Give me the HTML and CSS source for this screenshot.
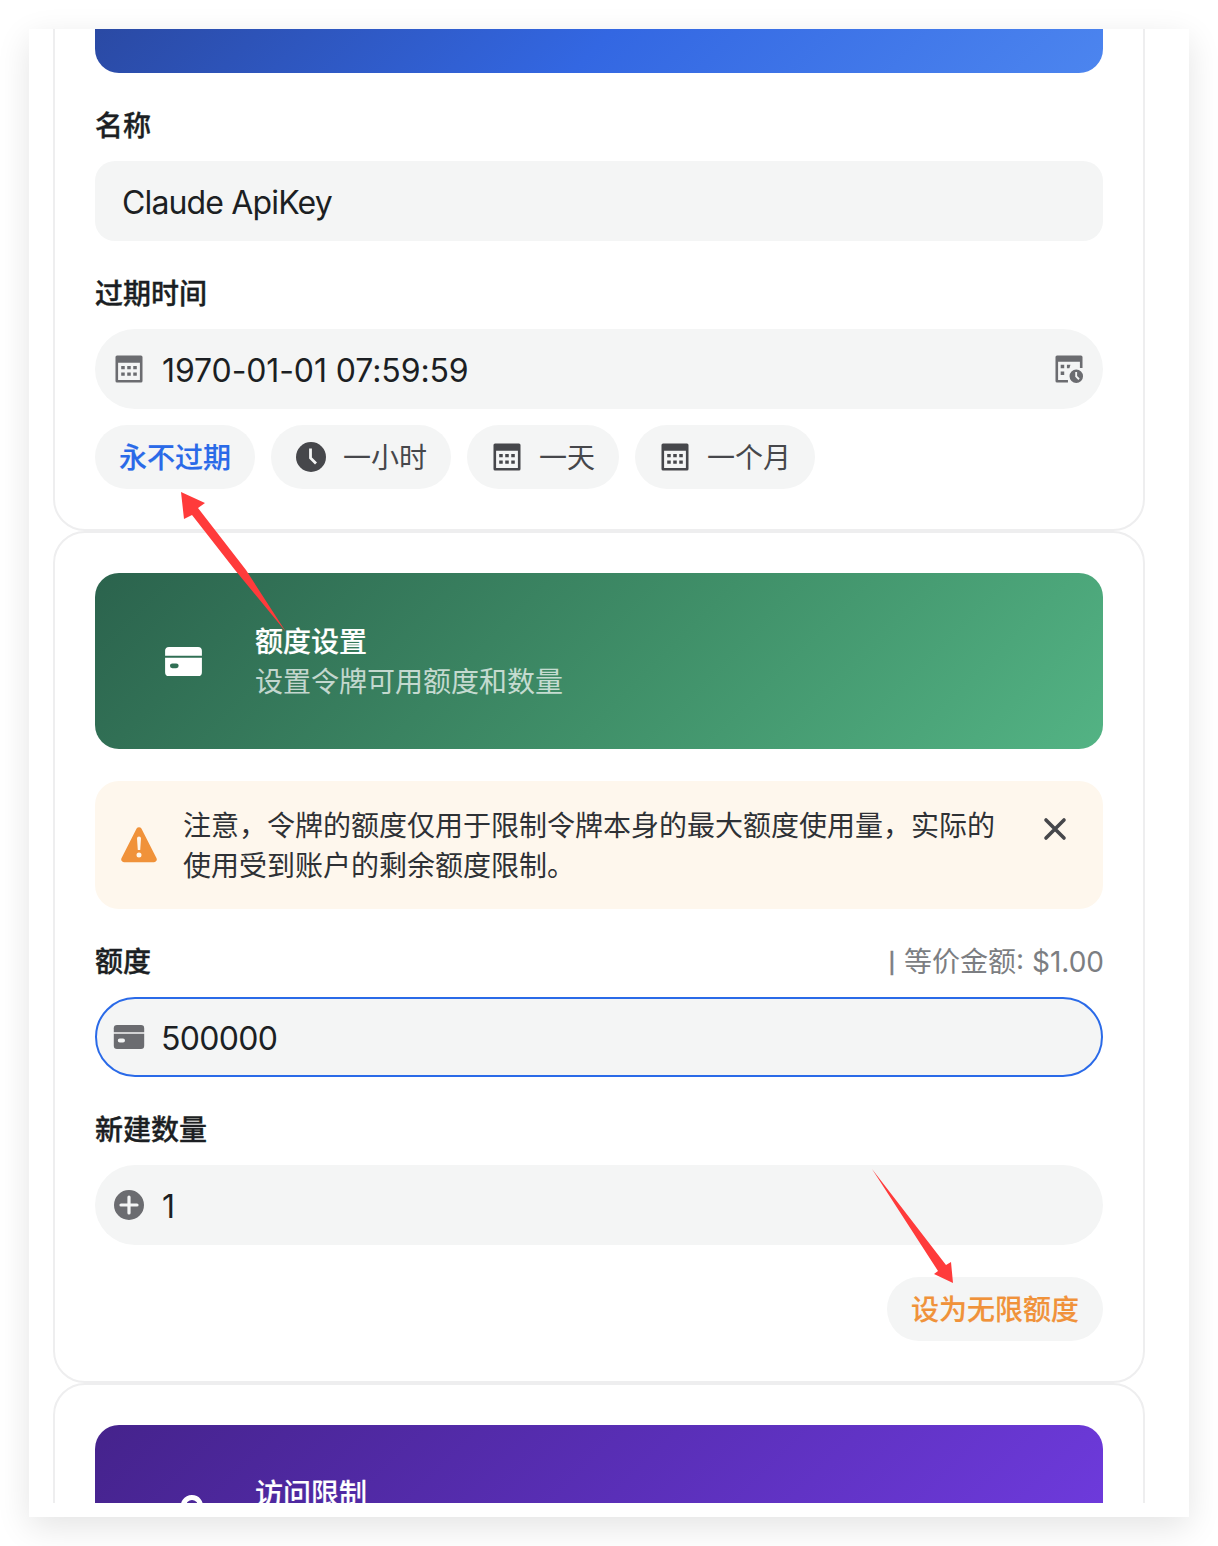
FILE: index.html
```html
<!DOCTYPE html>
<html lang="zh-CN">
<head>
  <meta charset="UTF-8" />
  <title>令牌设置</title>
  <link rel="stylesheet" href="styles.css">
</head>
<body>

  <!-- icon set -->
  <svg class="sprite" xmlns="http://www.w3.org/2000/svg">
    <symbol id="i-calendar" viewBox="-1.4 -1.4 30.8 30.8">
      <path fill-rule="evenodd" d="M2.500 1h23A1.500 1.500 0 0 1 27 2.500v23a1.500 1.500 0 0 1-1.500 1.500h-23A1.500 1.500 0 0 1 1 25.500v-23A1.500 1.500 0 0 1 2.500 1zM3.500 8v16.500h21V8z"/>
      <path d="M6.500 11h3.400v3.200H6.500zM12.300 11h3.400v3.200h-3.400zM18.100 11h3.400v3.200h-3.400zM6.500 17.300h3.400v3.200H6.500zM12.300 17.300h3.400v3.200h-3.400zM18.100 17.300h3.400v3.200h-3.400z"/>
    </symbol>
    <symbol id="i-calendar-clock" viewBox="-1.4 -1.4 30.8 30.8">
      <path d="M2.500 1h23A1.500 1.500 0 0 1 27 2.500V13h-2.500V7h-21v17.500H13V27H2.500A1.500 1.500 0 0 1 1 25.500v-23A1.500 1.500 0 0 1 2.500 1z"/>
      <path d="M6 10h3.400v3.200H6zM12 10h3.400l-1 3.200H12zM6 16.500h3.400v3.200H6z"/>
      <path fill-rule="evenodd" d="M21 14.500a6.500 6.500 0 1 1 0 13 6.500 6.500 0 0 1 0-13zM20 17v4.500l3 3 1.300-1.300-2.500-2.500V17z"/>
    </symbol>
    <symbol id="i-clock" viewBox="-1 -1 32 32">
      <circle cx="15" cy="15" r="15"/>
      <path class="bg-stroke" d="M14.500 6.500v9.500l5.500 5.500" fill="none" stroke-width="2.800"/>
    </symbol>
    <symbol id="i-card" viewBox="-1 -1 40 32">
      <path d="M4 0h30a4 4 0 0 1 4 4v5H0V4a4 4 0 0 1 4-4z"/>
      <path fill-rule="evenodd" d="M0 11h38v15a4 4 0 0 1-4 4H4a4 4 0 0 1-4-4zM7.500 17a1.500 1.500 0 0 0 0 5h4a1.500 1.500 0 0 0 0-5z"/>
    </symbol>
    <symbol id="i-warning" viewBox="0 0 36 36">
      <path fill-rule="evenodd" d="M15.600 1.500a2.800 2.800 0 0 1 4.800 0l15 29.500a2.800 2.800 0 0 1-2.400 4.200H3a2.800 2.800 0 0 1-2.400-4.200zM16 11.500l.8 11.500h2.400l.8-11.500a2 2 0 0 0-4 0zM18 25.500a2.500 2.500 0 1 0 0 5 2.500 2.500 0 0 0 0-5z"/>
    </symbol>
    <symbol id="i-close" viewBox="0 0 24 24">
      <path d="M3 3l18 18M21 3L3 21" fill="none" stroke="currentColor" stroke-width="3.600" stroke-linecap="round"/>
    </symbol>
    <symbol id="i-plus" viewBox="-1 -1 32 32">
      <path fill-rule="evenodd" d="M15 0a15 15 0 1 1 0 30 15 15 0 0 1 0-30zM13.400 7v6.400H7a1.600 1.600 0 0 0 0 3.200h6.400V23a1.600 1.600 0 0 0 3.200 0v-6.400H23a1.600 1.600 0 0 0 0-3.200h-6.400V7a1.600 1.600 0 0 0-3.200 0z"/>
    </symbol>
    <symbol id="i-key" viewBox="-1 -1 40 40">
      <path fill-rule="evenodd" d="M27 1a11 11 0 1 1-5 20.800L6 37H1v-6l15.500-15A11 11 0 0 1 27 1zM27 6a6 6 0 1 0 0 12 6 6 0 0 0 0-12z"/>
    </symbol>
  </svg>

  <div class="window">
    <div class="viewport">

      <!-- 基本信息 (scrolled off the top) -->
      <section class="card card-first">
        <div class="banner banner-blue"></div>

        <div class="label-row"><label>名称</label></div>
        <div class="field field-box">
          <span class="value value-flush">Claude ApiKey</span>
        </div>

        <div class="label-row"><label>过期时间</label></div>
        <div class="field">
          <svg class="icon field-icon"><use href="#i-calendar"/></svg>
          <span class="value value-date">1970-01-01 07:59:59</span>
          <svg class="icon field-icon field-end"><use href="#i-calendar-clock"/></svg>
        </div>
        <div class="pills">
          <a class="pill pill-primary"><span>永不过期</span></a>
          <a class="pill"><svg class="icon"><use href="#i-clock"/></svg><span>一小时</span></a>
          <a class="pill"><svg class="icon"><use href="#i-calendar"/></svg><span>一天</span></a>
          <a class="pill"><svg class="icon"><use href="#i-calendar"/></svg><span>一个月</span></a>
        </div>
      </section>

      <!-- 额度设置 -->
      <section class="card">
        <div class="banner banner-green">
          <svg class="banner-icon"><use href="#i-card"/></svg>
          <div class="banner-text">
            <h3>额度设置</h3>
            <p>设置令牌可用额度和数量</p>
          </div>
        </div>

        <div class="notice">
          <svg class="notice-icon"><use href="#i-warning"/></svg>
          <p>注意，令牌的额度仅用于限制令牌本身的最大额度使用量，实际的使用受到账户的剩余额度限制。</p>
          <svg class="notice-close"><use href="#i-close"/></svg>
        </div>

        <div class="label-row">
          <label>额度</label>
          <span class="hint"><span class="hint-bar">|</span> 等价金额: $1.00</span>
        </div>
        <div class="field field-focus">
          <svg class="icon field-icon"><use href="#i-card"/></svg>
          <span class="value">500000</span>
        </div>

        <div class="label-row"><label>新建数量</label></div>
        <div class="field">
          <svg class="icon field-icon"><use href="#i-plus"/></svg>
          <span class="value value-one">1</span>
        </div>

        <div class="pills pills-end">
          <a class="pill pill-warning"><span>设为无限额度</span></a>
        </div>
      </section>

      <!-- 访问限制 (cut by the window) -->
      <section class="card">
        <div class="banner banner-purple">
          <svg class="banner-icon banner-icon-key"><use href="#i-key"/></svg>
          <div class="banner-text banner-text-cut">
            <h3>访问限制</h3>
          </div>
        </div>
      </section>

    </div>
  </div>

  <!-- red arrows drawn over the screenshot -->
  <svg class="arrows" viewBox="0 0 1218 1546" xmlns="http://www.w3.org/2000/svg">
    <path d="M181 492L205 503L198 508L246 570L286 632L235 570L192 515L184 519Z"/>
    <path d="M872 1169L946 1265L951 1262L953 1283L934 1274L938 1271Z"/>
  </svg>

</body>
</html>
```

FILE: styles.css
```css
* {
  box-sizing: border-box;
  margin: 0;
  padding: 0;
}

body {
  position: relative;
  width: 1218px;
  height: 1546px;
  overflow: hidden;
  padding: 29px;
  background: #fff;
  font-family: Inter, "Noto Sans CJK SC", sans-serif;
  font-size: 28px;
  line-height: 40px;
  color: #1c1f23;
}

.sprite {
  display: none;
}

.window {
  height: 1488px;
  background: #fff;
  box-shadow: 0 10px 32px rgba(0, 0, 0, 0.11);
}

.viewport {
  height: 1474px;
  padding: 0 44px 0 24px;
  overflow: hidden;
}

.card {
  padding: 40px;
  background: #fff;
  border: 2px solid #eeeeef;
  border-radius: 32px;
}

.card-first {
  margin-top: -174px;
}

/* banners */
.banner {
  display: flex;
  align-items: center;
  height: 176px;
  padding-left: 69px;
  border-radius: 24px;
  color: #fff;
}

.banner-blue {
  background: linear-gradient(135deg, #284294 0%, #3367e2 55%, #4c85ef 100%);
}

.banner-green {
  background: linear-gradient(135deg, #2b634d 0%, #409069 55%, #53b384 100%);
}

.banner-purple {
  background: linear-gradient(135deg, #45238c 0%, #5a2fb8 50%, #713ce2 100%);
}

.banner-icon {
  flex: none;
  width: 39px;
  height: 31px;
  margin-right: 52px;
  fill: #fff;
}

.banner-icon-key {
  width: 40px;
  height: 40px;
  margin-right: 51px;
}

.banner-text {
  padding-top: 2px;
}

.banner-text-cut {
  padding-bottom: 40px;
}

.banner h3 {
  font-size: 28px;
  font-weight: 500;
  -webkit-text-stroke: 0.15px;
}

.banner p {
  opacity: 0.7;
}

/* form rows */
.label-row {
  display: flex;
  justify-content: space-between;
  height: 40px;
  margin: 33px 0 15px;
}

label {
  font-weight: 500;
  -webkit-text-stroke: 0.35px;
}

.hint {
  margin-right: -1px;
  color: #7c7e82;
}

.hint-bar {
  margin-right: 1px;
  font-family: "Liberation Sans", sans-serif;
  font-size: 26px;
  line-height: 1;
  vertical-align: 2px;
  -webkit-text-stroke: 0.4px;
}

.field {
  display: flex;
  align-items: center;
  height: 80px;
  padding: 0 18px;
  background: #f4f5f5;
  border-radius: 40px;
}

.field-box {
  padding: 0 27px;
  border-radius: 20px;
}

.field-focus {
  border: 2px solid #2a6ae8;
  padding: 0 16px;
}

.value {
  margin-left: 16px;
  padding-top: 4px;
  font-size: 32px;
  letter-spacing: -0.7px;
}

.value-flush {
  margin-left: 0;
  letter-spacing: -0.85px;
}

.value-date {
  margin-left: 17px;
  letter-spacing: -0.1px;
}

.value-one {
  margin-left: 17px;
}

.icon {
  flex: none;
  width: 32px;
  height: 32px;
  fill: #46474b;
}

.field-icon {
  fill: #6b6c70;
}

.field-end {
  margin-left: auto;
}

.bg-stroke {
  stroke: #f4f5f5;
}

/* quick buttons */
.pills {
  display: flex;
  gap: 16px;
  margin-top: 16px;
}

.pills-end {
  justify-content: flex-end;
  margin-top: 32px;
}

.pill {
  display: flex;
  align-items: center;
  gap: 16px;
  height: 64px;
  padding: 0 24px;
  background: #f4f5f5;
  border-radius: 32px;
  color: #46474b;
  cursor: pointer;
}

.pill span {
  padding-top: 2px;
}

.pill-primary {
  color: #2a6ae8;
  font-weight: 500;
  -webkit-text-stroke: 0.15px;
}

.pill-warning {
  color: #f0923a;
  font-weight: 500;
  -webkit-text-stroke: 0.15px;
}

/* warning notice */
.notice {
  display: flex;
  align-items: center;
  height: 128px;
  margin-top: 32px;
  padding: 0 36px 0 26px;
  background: #fef7ed;
  border-radius: 24px;
}

.notice-icon {
  flex: none;
  width: 36px;
  height: 36px;
  margin-right: 26px;
  fill: #f0923a;
}

.notice p {
  width: 830px;
  padding-top: 2px;
  color: #2e3135;
}

.notice-close {
  flex: none;
  align-self: flex-start;
  width: 24px;
  height: 24px;
  margin: 36px 0 0 auto;
  color: #46474b;
}

/* annotation overlay */
.arrows {
  position: absolute;
  top: 0;
  left: 0;
  width: 1218px;
  height: 1546px;
  fill: #ff3b3b;
  pointer-events: none;
}
```
